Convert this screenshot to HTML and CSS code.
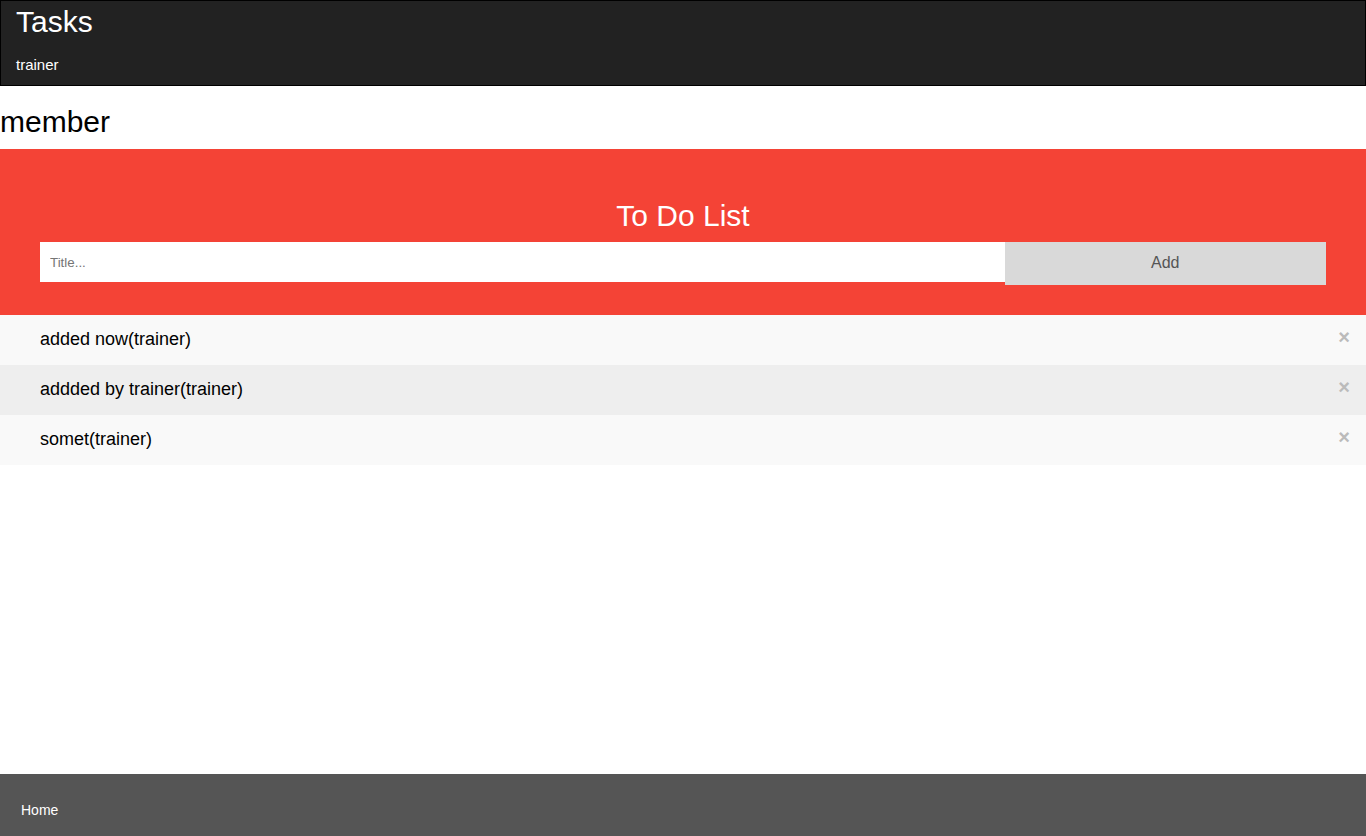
FILE: index.html
```html
<!DOCTYPE html>
<html lang="en">
<head>
  <meta charset="UTF-8" />
  <title>Tasks</title>
  <link rel="stylesheet" href="styles.css">
</head>
<body>

<div class="topbar">
  <h1>Tasks</h1>
  <div class="usuario">trainer</div>
</div>

<h2 class="rol">member</h2>

<div class="cabecera">
  <h2>To Do List</h2>
  <form class="fila-agregar" onsubmit="agregarTarea(); return false;">
    <input type="text" id="titulo" placeholder="Title...">
    <span class="btn-agregar" onclick="agregarTarea()">Add</span>
  </form>
</div>

<ul id="lista" class="lista">
  <li><span>added now(trainer)</span><span class="cerrar">&times;</span></li>
  <li><span>addded by trainer(trainer)</span><span class="cerrar">&times;</span></li>
  <li><span>somet(trainer)</span><span class="cerrar">&times;</span></li>
</ul>

<div class="pie">
  <a href="#">Home</a>
</div>

<script>
const lista = document.getElementById("lista");

function agregarTarea() {
  const input = document.getElementById("titulo");
  const texto = input.value.trim();
  if (texto === "") return;
  const li = document.createElement("li");
  li.innerHTML = `<span>${texto}(trainer)</span><span class="cerrar">&times;</span>`;
  lista.appendChild(li);
  input.value = "";
}

lista.addEventListener("click", function (e) {
  if (e.target.classList.contains("cerrar")) {
    e.target.parentElement.remove();
  }
});
</script>

</body>
</html>
```

FILE: styles.css
```css
html, body { height: 100%; }
body {
  margin: 0;
  font-family: "Liberation Sans", Arial, sans-serif;
  display: flex;
  flex-direction: column;
  min-height: 100vh;
}

.topbar {
  background: #222;
  border: 1px solid #000;
  color: #fff;
  padding: 3px 15px 11px;
}
.topbar h1 {
  margin: 0;
  font-size: 30px;
  line-height: 36px;
  font-weight: normal;
}
.usuario {
  margin-top: 16px;
  font-size: 15px;
  line-height: 18px;
}

.rol {
  margin: 18px 0 9px;
  font-size: 30px;
  line-height: 36px;
  font-weight: normal;
}

.cabecera {
  background-color: #f44336;
  padding: 30px 40px;
  color: white;
  text-align: center;
}
.cabecera h2 {
  margin: 19px 0 8px;
  font-size: 30px;
  line-height: 36px;
  font-weight: normal;
}
.fila-agregar {
  display: flex;
  align-items: flex-start;
  margin: 0;
}
.fila-agregar input {
  width: 75%;
  height: 40px;
  box-sizing: border-box;
  margin: 0;
  border: none;
  border-radius: 0;
  padding: 10px;
  font-family: inherit;
  font-size: 13.33px;
  outline: none;
}
.fila-agregar input::placeholder { color: #757575; }
.btn-agregar {
  width: 25%;
  box-sizing: border-box;
  padding: 9px 10px 11px;
  line-height: 23px;
  background: #d9d9d9;
  color: #555;
  font-size: 16px;
  text-align: center;
  cursor: pointer;
}
.btn-agregar:hover { background-color: #bbb; }

.lista {
  margin: 0;
  padding: 0;
  list-style: none;
}
.lista li {
  display: flex;
  justify-content: space-between;
  align-items: flex-start;
  padding: 11px 0 13px 40px;
  font-size: 18px;
  line-height: 26px;
  background: #f9f9f9;
}
.lista li:nth-child(even) { background: #eee; }
.cerrar {
  padding: 0 16px;
  color: #bbb;
  font-size: 20px;
  font-weight: bold;
  line-height: 22px;
  cursor: pointer;
}
.cerrar:hover { color: #f44336; }

.pie {
  margin-top: auto;
  background: #555;
  padding: 26px 21px 16px;
  font-size: 14px;
  line-height: 20px;
}
.pie a {
  color: #fff;
  text-decoration: none;
}
```
